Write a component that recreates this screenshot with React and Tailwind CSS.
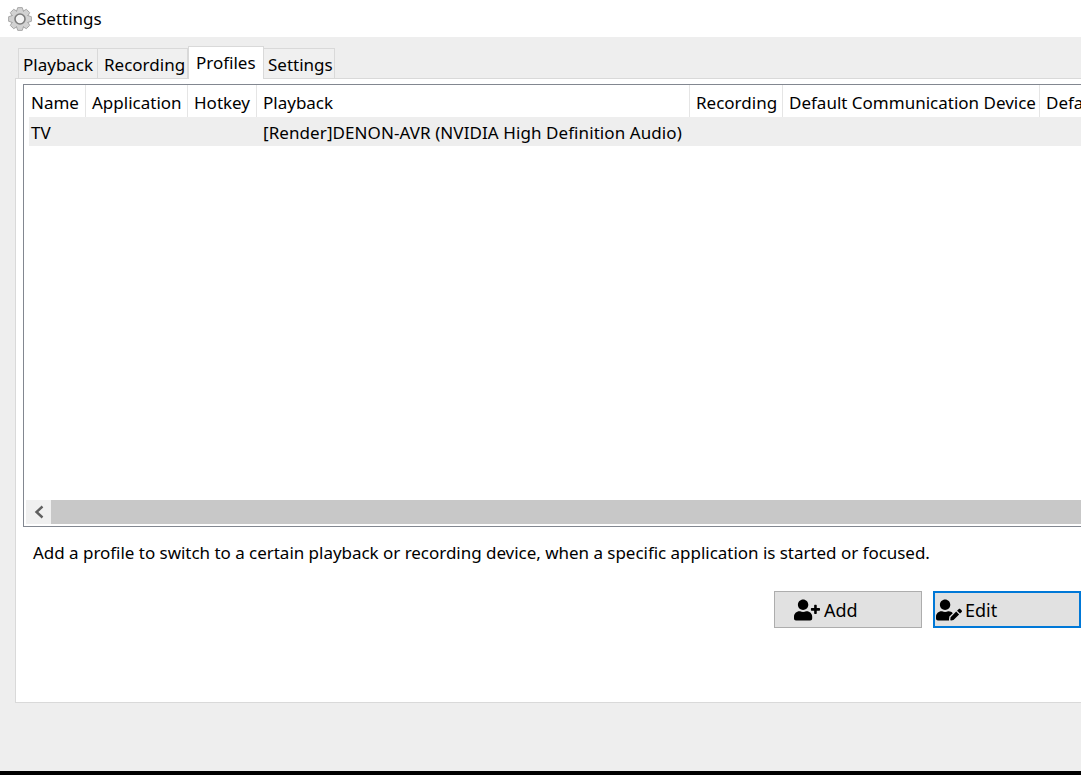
import React from "react";
import { FaUserPlus, FaUserEdit } from "react-icons/fa";

const font = { fontFamily: '"Noto Sans", sans-serif' };

// 8 toothed cog around the centre of a 24 box
const gearPath = () => {
  const pts = [];
  for (let i = 0; i < 8; i++) {
    const a = (i * Math.PI) / 4;
    [[-0.42, 8.4], [-0.2, 11.6], [0.2, 11.6], [0.42, 8.4]].forEach(([d, r]) => {
      pts.push(`${(12 + r * Math.sin(a + d)).toFixed(2)} ${(12 - r * Math.cos(a + d)).toFixed(2)}`);
    });
  }
  return "M" + pts.join("L") + "Z";
};

const Gear = () => (
  <svg width="24" height="24" viewBox="0 0 24 24">
    <path d={gearPath()} fill="#d2d2d2" stroke="#a6a6a6" strokeWidth="1" strokeLinejoin="round" />
    <circle cx="12" cy="12" r="5" fill="#f4f4f4" stroke="#7d7d7d" strokeWidth="1.600" />
  </svg>
);

const tabs = [
  { label: "Playback", cls: "w-[80px] pl-[4px]" },
  { label: "Recording", cls: "w-[91px] -ml-px pl-[6px]" },
  { label: "Profiles", cls: "w-[76px] pl-[7px]", active: true },
  { label: "Settings", cls: "w-[72px] -ml-px pl-[4px]" },
];

const columns = [
  { label: "Name", w: "w-[62px] pl-[7px]" },
  { label: "Application", w: "w-[102px] pl-[6px]" },
  { label: "Hotkey", w: "w-[69px] pl-[6px]" },
  { label: "Playback", w: "w-[433px] pl-[6px]" },
  { label: "Recording", w: "w-[93px] pl-[6px]" },
  { label: "Default Communication Device", w: "w-[257px] pl-[6px]" },
  { label: "Default Recording Device", w: "w-[250px] pl-[6px]" },
];

const App = () => {
  return (
    <div className="w-[1081px] h-[775px] overflow-hidden flex flex-col bg-[#eeeeee] text-[17px] text-black" style={font}>
      <div className="h-[37px] bg-white flex items-center pl-[8px] gap-[5px] shrink-0">
        <Gear />
        <span className="text-[17px]">Settings</span>
      </div>

      <div className="h-[41px] flex items-end pl-[18px] shrink-0">
        {tabs.map((t) =>
          t.active ? (
            <div key={t.label} className={`${t.cls} h-[33px] -mb-px relative z-10 bg-white border border-b-0 border-[#d9d9d9] leading-[31px]`}>
              {t.label}
            </div>
          ) : (
            <div key={t.label} className={`${t.cls} h-[30px] bg-[#f0f0f0] border border-b-0 border-[#d9d9d9] leading-[32px]`}>
              {t.label}
            </div>
          )
        )}
      </div>

      <div className="ml-[15px] h-[625px] bg-white border-t border-l border-b border-[#d9d9d9] pt-[5px] pl-[7px] shrink-0">
        <div className="h-[443px] border-t border-l border-b border-[#828790] flex flex-col overflow-hidden">
          <div className="h-[32px] flex shrink-0">
            {columns.map((c) => (
              <div key={c.label} className={`${c.w} shrink-0 border-r border-[#e5e5e5] leading-[36px] whitespace-nowrap overflow-hidden`}>
                {c.label}
              </div>
            ))}
          </div>
          <div className="flex-1 pl-[5px]">
            <div className="h-[29px] bg-[#eeeeee] flex leading-[31px] whitespace-nowrap">
              <div className="w-[234px] pl-[2px]">TV</div>
              <div className="tracking-[0.08px]">[Render]DENON-AVR (NVIDIA High Definition Audio)</div>
            </div>
          </div>
          <div className="h-[24px] mb-[2px] ml-[2px] flex shrink-0 bg-[#c8c8c8]">
            <div className="w-[25px] bg-[#f0f0f0] flex items-center justify-center">
              <svg width="12" height="14" viewBox="0 0 12 14">
                <path d="M9.500 1.500 3.500 7l6 5.500" fill="none" stroke="#606060" strokeWidth="2.400" />
              </svg>
            </div>
          </div>
        </div>

        <p className="mt-[14px] pl-[10px] leading-[24px] tracking-[-0.03px] whitespace-nowrap">
          Add a profile to switch to a certain playback or recording device, when a specific application is started or focused.
        </p>

        <div className="mt-[26px] flex justify-end gap-[11px]">
          <button className="w-[148px] h-[37px] bg-[#e1e1e1] border border-[#adadad] flex items-center pl-[19px] gap-[4px] text-[18px]">
            <FaUserPlus size={26} />
            <span className="pt-[2px]">Add</span>
          </button>
          <button className="w-[148px] h-[37px] bg-[#e1e1e1] border-2 border-[#0078d7] flex items-center pl-[1px] gap-[3px] text-[18px]">
            <FaUserEdit size={26} />
            <span className="pt-[2px]">Edit</span>
          </button>
        </div>
      </div>

      <div className="flex-1" />
      <div className="h-[4px] bg-black shrink-0" />
    </div>
  );
};

export default App;
